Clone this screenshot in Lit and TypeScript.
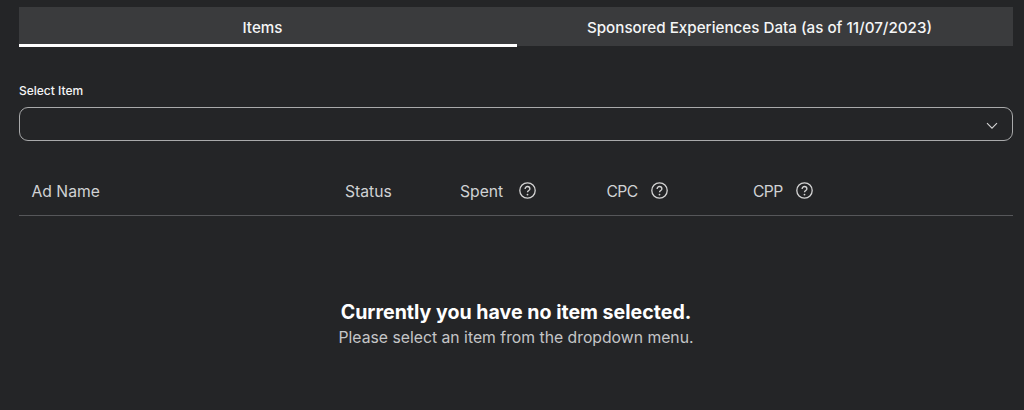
import { LitElement, html, css } from "lit";
import { customElement } from "lit/decorators.js";

const help = html`<svg class="help" viewBox="0 0 17 17" width="17" height="17" fill="none" stroke="#d4d4d4">
  <circle cx="8.5" cy="8.5" r="7.7" stroke-width="1.3"></circle>
  <path d="M6.1 6.9a2.4 2.4 0 0 1 4.8 0c0 1.6-2.4 1.7-2.4 3.4" stroke-width="1.3"></path>
  <circle cx="8.5" cy="12.6" r=".9" fill="#d4d4d4" stroke="none"></circle>
</svg>`;

@customElement("app-root")
export class AppRoot extends LitElement {
  static styles = css`
    :host {
      display: block;
      width: 1024px;
      height: 410px;
      overflow: hidden;
      box-sizing: border-box;
      padding: 7px 11px 0 19px;
      background: #242527;
      font-family: Inter, "Noto Sans", sans-serif;
      color: #d0d2d4;
    }
    .tabs {
      display: grid;
      grid-template-columns: 498px 1fr;
      height: 39px;
      background: #3a3b3d;
    }
    .tab {
      display: flex;
      align-items: center;
      justify-content: center;
      font-size: 15.2px;
      font-weight: 500;
      color: #f4f5f6;
      height: 39px;
      box-sizing: border-box;
      padding: 2px 11px 0 0;
    }
    .tab.active {
      height: 40px;
      border-bottom: 3px solid #fff;
      padding-top: 3px;
    }
    .label {
      margin-top: 38px;
      font-size: 12px;
      line-height: 14px;
      font-weight: 500;
      color: #f4f5f6;
    }
    .select {
      margin-top: 9px;
      height: 34px;
      box-sizing: border-box;
      border: 1px solid #a9aaab;
      border-radius: 9px;
      display: flex;
      align-items: center;
      justify-content: flex-end;
      padding: 4px 14px 0 0;
    }
    .head {
      margin-top: 23px;
      height: 52px;
      box-sizing: border-box;
      border-bottom: 1px solid #56575a;
      display: grid;
      grid-template-columns: 313.5px 115px 146.5px 146.5px 1fr;
      align-items: center;
      font-size: 15.7px;
      padding: 4px 0 0 12.5px;
    }
    .col {
      display: flex;
      align-items: center;
      gap: 16px;
    }
    .col.tight {
      gap: 13px;
      letter-spacing: -0.6px;
    }
    .help {
      margin-top: -3px;
    }
    .empty {
      margin-top: 84px;
      text-align: center;
    }
    .title {
      font-size: 19.6px;
      line-height: 24px;
      font-weight: 700;
      color: #fff;
    }
    .sub {
      font-size: 15.75px;
      line-height: 20px;
      margin-top: 4px;
      color: #c4c6c8;
    }
  `;

  render() {
    return html`
      <div class="tabs">
        <div class="tab active">Items</div>
        <div class="tab">Sponsored Experiences Data (as of 11/07/2023)</div>
      </div>
      <div class="label">Select Item</div>
      <div class="select">
        <svg viewBox="0 0 12 8" width="12" height="8" fill="none" stroke="#d4d4d4" stroke-width="1.1"><path d="M1 1.2l5 5 5-5"></path></svg>
      </div>
      <div class="head">
        <div class="col">Ad Name</div>
        <div class="col">Status</div>
        <div class="col">Spent ${help}</div>
        <div class="col tight">CPC ${help}</div>
        <div class="col tight">CPP ${help}</div>
      </div>
      <div class="empty">
        <div class="title">Currently you have no item selected.</div>
        <div class="sub">Please select an item from the dropdown menu.</div>
      </div>
    `;
  }
}
